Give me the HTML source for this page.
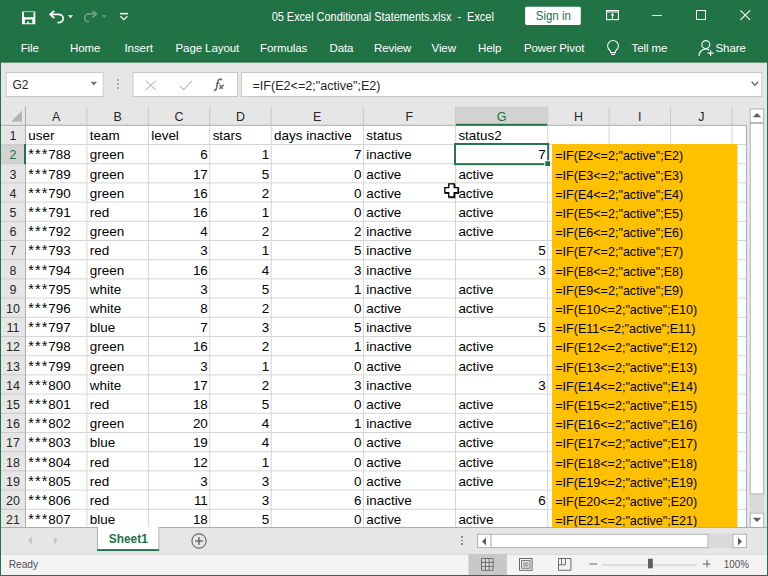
<!DOCTYPE html>
<html><head><meta charset="utf-8">
<style>
html,body{margin:0;padding:0;width:768px;height:576px;overflow:hidden;background:#217346;}
#w{position:absolute;left:0;top:0;width:800px;height:600px;transform:scale(0.96);transform-origin:0 0;background:#E6E6E6;overflow:hidden;font-family:"Liberation Sans",sans-serif;}
#o{position:absolute;left:0;top:0;width:768px;height:576px;overflow:hidden;}
.a{position:absolute;}
svg.a{overflow:visible;}
.t{position:absolute;white-space:nowrap;line-height:1;}
#top{position:absolute;left:0;top:0;width:800px;height:65px;background:#217346;}
.wt{color:#fff;font-size:12px;letter-spacing:-0.1px;}
.box{position:absolute;background:#fff;border:1px solid #C6C6C6;box-sizing:border-box;}
.ch{position:absolute;top:111px;height:19px;color:#262626;font-size:13px;text-align:center;line-height:21px;}
.ch.sel{background:#D2D2D2;color:#217346;}
.hsep{position:absolute;top:111px;width:1px;height:19px;background:#C9C9C9;}
.rh{position:absolute;left:1px;width:25px;height:19px;color:#262626;font-size:13px;text-align:center;line-height:22px;}
.rh.sel{background:#D2D2D2;color:#217346;}
.vl{position:absolute;top:131px;width:1px;height:418px;background:#D4D4D4;}
.hl{position:absolute;left:27px;height:1px;width:750px;background:#D4D4D4;}
.c{position:absolute;height:19px;font-size:14px;line-height:20px;color:#000;white-space:nowrap;padding-left:2.5px;padding-top:0px;box-sizing:border-box;}
.c.r{text-align:right;padding-left:0;padding-right:1.5px;}
.c.f{transform:scaleX(0.935);transform-origin:0 0;margin-top:0.6px;}
.ast{font-size:15px;letter-spacing:1.1px;}
.orange{position:absolute;background:#FFC000;}
</style></head><body>
<div id="w">
<div id="top"></div>
<div class="a" style="left:0;top:64px;width:800px;height:1px;background:#1E6B40;"></div>
<div class="t wt" style="left:283px;top:12.3px;font-size:12.5px;letter-spacing:0;transform:scaleX(0.91);transform-origin:0 0;">05 Excel Conditional Statements.xlsx &nbsp;- &nbsp;Excel</div>
<div class="a" style="left:547px;top:7px;width:58.2px;height:19px;background:#fff;border-radius:1.5px;"></div>
<div class="t" style="left:558px;top:10.2px;font-size:13px;color:#217346;transform:scaleX(0.925);transform-origin:0 0;">Sign in</div>
<!-- tabs -->
<div class="t wt" style="left:21.5px;top:43.6px;">File</div>
<div class="t wt" style="left:73px;top:43.6px;">Home</div>
<div class="t wt" style="left:129.7px;top:43.6px;">Insert</div>
<div class="t wt" style="left:182.8px;top:43.6px;">Page Layout</div>
<div class="t wt" style="left:270.8px;top:43.6px;">Formulas</div>
<div class="t wt" style="left:343.2px;top:43.6px;">Data</div>
<div class="t wt" style="left:389.6px;top:43.6px;">Review</div>
<div class="t wt" style="left:449.5px;top:43.6px;">View</div>
<div class="t wt" style="left:498px;top:43.6px;">Help</div>
<div class="t wt" style="left:545.8px;top:43.6px;">Power Pivot</div>
<div class="t wt" style="left:657.8px;top:43.6px;">Tell me</div>
<div class="t wt" style="left:745.3px;top:43.6px;">Share</div>

<!-- formula bar -->
<div class="box" style="left:6px;top:75px;width:102px;height:26px;"></div>
<div class="t" style="left:13px;top:83.3px;font-size:12.5px;color:#262626;">G2</div>
<div class="box" style="left:138px;top:75px;width:110px;height:26px;"></div>
<div class="box" style="left:251px;top:75px;width:543px;height:26px;"></div>
<div class="t" style="left:262.5px;top:81.8px;font-size:14px;color:#262626;transform:scaleX(0.935);transform-origin:0 0;">=IF(E2&lt;=2;"active";E2)</div>

<!-- grid -->
<div class="a" style="left:1px;top:111px;width:776px;height:19px;background:#E6E6E6;"></div>
<div class="a" style="left:27px;top:131px;width:750px;height:418px;background:#fff"></div>
<div class="ch" style="left:27px;width:63px">A</div>
<div class="ch" style="left:91px;width:63px">B</div>
<div class="ch" style="left:155px;width:63px">C</div>
<div class="ch" style="left:219px;width:63px">D</div>
<div class="ch" style="left:283px;width:95px">E</div>
<div class="ch" style="left:379px;width:95px">F</div>
<div class="ch sel" style="left:475px;width:95px">G</div>
<div class="ch" style="left:571px;width:63px">H</div>
<div class="ch" style="left:635px;width:63px">I</div>
<div class="ch" style="left:699px;width:63px">J</div>
<div class="hsep" style="left:26px"></div>
<div class="hsep" style="left:90px"></div>
<div class="hsep" style="left:154px"></div>
<div class="hsep" style="left:218px"></div>
<div class="hsep" style="left:282px"></div>
<div class="hsep" style="left:378px"></div>
<div class="hsep" style="left:474px"></div>
<div class="hsep" style="left:570px"></div>
<div class="hsep" style="left:634px"></div>
<div class="hsep" style="left:698px"></div>
<div class="hsep" style="left:762px"></div>
<div class="a" style="left:1px;top:130px;width:776px;height:1px;background:#ABABAB"></div>
<div class="rh" style="top:131px">1</div>
<div class="a" style="left:1px;top:150px;width:25px;height:1px;background:#C9C9C9"></div>
<div class="rh sel" style="top:151px">2</div>
<div class="a" style="left:1px;top:170px;width:25px;height:1px;background:#C9C9C9"></div>
<div class="rh" style="top:171px">3</div>
<div class="a" style="left:1px;top:190px;width:25px;height:1px;background:#C9C9C9"></div>
<div class="rh" style="top:191px">4</div>
<div class="a" style="left:1px;top:210px;width:25px;height:1px;background:#C9C9C9"></div>
<div class="rh" style="top:211px">5</div>
<div class="a" style="left:1px;top:230px;width:25px;height:1px;background:#C9C9C9"></div>
<div class="rh" style="top:231px">6</div>
<div class="a" style="left:1px;top:250px;width:25px;height:1px;background:#C9C9C9"></div>
<div class="rh" style="top:251px">7</div>
<div class="a" style="left:1px;top:270px;width:25px;height:1px;background:#C9C9C9"></div>
<div class="rh" style="top:271px">8</div>
<div class="a" style="left:1px;top:290px;width:25px;height:1px;background:#C9C9C9"></div>
<div class="rh" style="top:291px">9</div>
<div class="a" style="left:1px;top:310px;width:25px;height:1px;background:#C9C9C9"></div>
<div class="rh" style="top:311px">10</div>
<div class="a" style="left:1px;top:330px;width:25px;height:1px;background:#C9C9C9"></div>
<div class="rh" style="top:331px">11</div>
<div class="a" style="left:1px;top:350px;width:25px;height:1px;background:#C9C9C9"></div>
<div class="rh" style="top:351px">12</div>
<div class="a" style="left:1px;top:370px;width:25px;height:1px;background:#C9C9C9"></div>
<div class="rh" style="top:371px">13</div>
<div class="a" style="left:1px;top:390px;width:25px;height:1px;background:#C9C9C9"></div>
<div class="rh" style="top:391px">14</div>
<div class="a" style="left:1px;top:410px;width:25px;height:1px;background:#C9C9C9"></div>
<div class="rh" style="top:411px">15</div>
<div class="a" style="left:1px;top:430px;width:25px;height:1px;background:#C9C9C9"></div>
<div class="rh" style="top:431px">16</div>
<div class="a" style="left:1px;top:450px;width:25px;height:1px;background:#C9C9C9"></div>
<div class="rh" style="top:451px">17</div>
<div class="a" style="left:1px;top:470px;width:25px;height:1px;background:#C9C9C9"></div>
<div class="rh" style="top:471px">18</div>
<div class="a" style="left:1px;top:490px;width:25px;height:1px;background:#C9C9C9"></div>
<div class="rh" style="top:491px">19</div>
<div class="a" style="left:1px;top:510px;width:25px;height:1px;background:#C9C9C9"></div>
<div class="rh" style="top:511px">20</div>
<div class="a" style="left:1px;top:530px;width:25px;height:1px;background:#C9C9C9"></div>
<div class="rh" style="top:531px">21</div>
<div class="a" style="left:26px;top:111px;width:1px;height:438px;background:#ABABAB"></div>
<div class="a" style="left:25px;top:150px;width:2px;height:21px;background:#217346"></div>
<div class="vl" style="left:90px"></div>
<div class="vl" style="left:154px"></div>
<div class="vl" style="left:218px"></div>
<div class="vl" style="left:282px"></div>
<div class="vl" style="left:378px"></div>
<div class="vl" style="left:474px"></div>
<div class="vl" style="left:570px"></div>
<div class="vl" style="left:634px"></div>
<div class="vl" style="left:698px"></div>
<div class="vl" style="left:762px"></div>
<div class="hl" style="top:150px"></div>
<div class="hl" style="top:170px"></div>
<div class="hl" style="top:190px"></div>
<div class="hl" style="top:210px"></div>
<div class="hl" style="top:230px"></div>
<div class="hl" style="top:250px"></div>
<div class="hl" style="top:270px"></div>
<div class="hl" style="top:290px"></div>
<div class="hl" style="top:310px"></div>
<div class="hl" style="top:330px"></div>
<div class="hl" style="top:350px"></div>
<div class="hl" style="top:370px"></div>
<div class="hl" style="top:390px"></div>
<div class="hl" style="top:410px"></div>
<div class="hl" style="top:430px"></div>
<div class="hl" style="top:450px"></div>
<div class="hl" style="top:470px"></div>
<div class="hl" style="top:490px"></div>
<div class="hl" style="top:510px"></div>
<div class="hl" style="top:530px"></div>
<div class="orange" style="left:575px;top:150px;width:193px;height:399px"></div>
<div class="c" style="top:131px;left:27px">user</div>
<div class="c" style="top:131px;left:91px">team</div>
<div class="c" style="top:131px;left:155px">level</div>
<div class="c" style="top:131px;left:219px">stars</div>
<div class="c" style="top:131px;left:283px">days inactive</div>
<div class="c" style="top:131px;left:379px">status</div>
<div class="c" style="top:131px;left:475px">status2</div>
<div class="c" style="top:151px;left:27px"><span class="ast">***</span>788</div>
<div class="c" style="top:151px;left:91px">green</div>
<div class="c r" style="top:151px;left:155px;width:63px">6</div>
<div class="c r" style="top:151px;left:219px;width:63px">1</div>
<div class="c r" style="top:151px;left:283px;width:95px">7</div>
<div class="c" style="top:151px;left:379px">inactive</div>
<div class="c r" style="top:151px;left:475px;width:95px">7</div>
<div class="c f" style="top:151px;left:575.8px">=IF(E2&lt;=2;"active";E2)</div>
<div class="c" style="top:171px;left:27px"><span class="ast">***</span>789</div>
<div class="c" style="top:171px;left:91px">green</div>
<div class="c r" style="top:171px;left:155px;width:63px">17</div>
<div class="c r" style="top:171px;left:219px;width:63px">5</div>
<div class="c r" style="top:171px;left:283px;width:95px">0</div>
<div class="c" style="top:171px;left:379px">active</div>
<div class="c" style="top:171px;left:475px">active</div>
<div class="c f" style="top:171px;left:575.8px">=IF(E3&lt;=2;"active";E3)</div>
<div class="c" style="top:191px;left:27px"><span class="ast">***</span>790</div>
<div class="c" style="top:191px;left:91px">green</div>
<div class="c r" style="top:191px;left:155px;width:63px">16</div>
<div class="c r" style="top:191px;left:219px;width:63px">2</div>
<div class="c r" style="top:191px;left:283px;width:95px">0</div>
<div class="c" style="top:191px;left:379px">active</div>
<div class="c" style="top:191px;left:475px">active</div>
<div class="c f" style="top:191px;left:575.8px">=IF(E4&lt;=2;"active";E4)</div>
<div class="c" style="top:211px;left:27px"><span class="ast">***</span>791</div>
<div class="c" style="top:211px;left:91px">red</div>
<div class="c r" style="top:211px;left:155px;width:63px">16</div>
<div class="c r" style="top:211px;left:219px;width:63px">1</div>
<div class="c r" style="top:211px;left:283px;width:95px">0</div>
<div class="c" style="top:211px;left:379px">active</div>
<div class="c" style="top:211px;left:475px">active</div>
<div class="c f" style="top:211px;left:575.8px">=IF(E5&lt;=2;"active";E5)</div>
<div class="c" style="top:231px;left:27px"><span class="ast">***</span>792</div>
<div class="c" style="top:231px;left:91px">green</div>
<div class="c r" style="top:231px;left:155px;width:63px">4</div>
<div class="c r" style="top:231px;left:219px;width:63px">2</div>
<div class="c r" style="top:231px;left:283px;width:95px">2</div>
<div class="c" style="top:231px;left:379px">inactive</div>
<div class="c" style="top:231px;left:475px">active</div>
<div class="c f" style="top:231px;left:575.8px">=IF(E6&lt;=2;"active";E6)</div>
<div class="c" style="top:251px;left:27px"><span class="ast">***</span>793</div>
<div class="c" style="top:251px;left:91px">red</div>
<div class="c r" style="top:251px;left:155px;width:63px">3</div>
<div class="c r" style="top:251px;left:219px;width:63px">1</div>
<div class="c r" style="top:251px;left:283px;width:95px">5</div>
<div class="c" style="top:251px;left:379px">inactive</div>
<div class="c r" style="top:251px;left:475px;width:95px">5</div>
<div class="c f" style="top:251px;left:575.8px">=IF(E7&lt;=2;"active";E7)</div>
<div class="c" style="top:271px;left:27px"><span class="ast">***</span>794</div>
<div class="c" style="top:271px;left:91px">green</div>
<div class="c r" style="top:271px;left:155px;width:63px">16</div>
<div class="c r" style="top:271px;left:219px;width:63px">4</div>
<div class="c r" style="top:271px;left:283px;width:95px">3</div>
<div class="c" style="top:271px;left:379px">inactive</div>
<div class="c r" style="top:271px;left:475px;width:95px">3</div>
<div class="c f" style="top:271px;left:575.8px">=IF(E8&lt;=2;"active";E8)</div>
<div class="c" style="top:291px;left:27px"><span class="ast">***</span>795</div>
<div class="c" style="top:291px;left:91px">white</div>
<div class="c r" style="top:291px;left:155px;width:63px">3</div>
<div class="c r" style="top:291px;left:219px;width:63px">5</div>
<div class="c r" style="top:291px;left:283px;width:95px">1</div>
<div class="c" style="top:291px;left:379px">inactive</div>
<div class="c" style="top:291px;left:475px">active</div>
<div class="c f" style="top:291px;left:575.8px">=IF(E9&lt;=2;"active";E9)</div>
<div class="c" style="top:311px;left:27px"><span class="ast">***</span>796</div>
<div class="c" style="top:311px;left:91px">white</div>
<div class="c r" style="top:311px;left:155px;width:63px">8</div>
<div class="c r" style="top:311px;left:219px;width:63px">2</div>
<div class="c r" style="top:311px;left:283px;width:95px">0</div>
<div class="c" style="top:311px;left:379px">active</div>
<div class="c" style="top:311px;left:475px">active</div>
<div class="c f" style="top:311px;left:575.8px">=IF(E10&lt;=2;"active";E10)</div>
<div class="c" style="top:331px;left:27px"><span class="ast">***</span>797</div>
<div class="c" style="top:331px;left:91px">blue</div>
<div class="c r" style="top:331px;left:155px;width:63px">7</div>
<div class="c r" style="top:331px;left:219px;width:63px">3</div>
<div class="c r" style="top:331px;left:283px;width:95px">5</div>
<div class="c" style="top:331px;left:379px">inactive</div>
<div class="c r" style="top:331px;left:475px;width:95px">5</div>
<div class="c f" style="top:331px;left:575.8px">=IF(E11&lt;=2;"active";E11)</div>
<div class="c" style="top:351px;left:27px"><span class="ast">***</span>798</div>
<div class="c" style="top:351px;left:91px">green</div>
<div class="c r" style="top:351px;left:155px;width:63px">16</div>
<div class="c r" style="top:351px;left:219px;width:63px">2</div>
<div class="c r" style="top:351px;left:283px;width:95px">1</div>
<div class="c" style="top:351px;left:379px">inactive</div>
<div class="c" style="top:351px;left:475px">active</div>
<div class="c f" style="top:351px;left:575.8px">=IF(E12&lt;=2;"active";E12)</div>
<div class="c" style="top:371px;left:27px"><span class="ast">***</span>799</div>
<div class="c" style="top:371px;left:91px">green</div>
<div class="c r" style="top:371px;left:155px;width:63px">3</div>
<div class="c r" style="top:371px;left:219px;width:63px">1</div>
<div class="c r" style="top:371px;left:283px;width:95px">0</div>
<div class="c" style="top:371px;left:379px">active</div>
<div class="c" style="top:371px;left:475px">active</div>
<div class="c f" style="top:371px;left:575.8px">=IF(E13&lt;=2;"active";E13)</div>
<div class="c" style="top:391px;left:27px"><span class="ast">***</span>800</div>
<div class="c" style="top:391px;left:91px">white</div>
<div class="c r" style="top:391px;left:155px;width:63px">17</div>
<div class="c r" style="top:391px;left:219px;width:63px">2</div>
<div class="c r" style="top:391px;left:283px;width:95px">3</div>
<div class="c" style="top:391px;left:379px">inactive</div>
<div class="c r" style="top:391px;left:475px;width:95px">3</div>
<div class="c f" style="top:391px;left:575.8px">=IF(E14&lt;=2;"active";E14)</div>
<div class="c" style="top:411px;left:27px"><span class="ast">***</span>801</div>
<div class="c" style="top:411px;left:91px">red</div>
<div class="c r" style="top:411px;left:155px;width:63px">18</div>
<div class="c r" style="top:411px;left:219px;width:63px">5</div>
<div class="c r" style="top:411px;left:283px;width:95px">0</div>
<div class="c" style="top:411px;left:379px">active</div>
<div class="c" style="top:411px;left:475px">active</div>
<div class="c f" style="top:411px;left:575.8px">=IF(E15&lt;=2;"active";E15)</div>
<div class="c" style="top:431px;left:27px"><span class="ast">***</span>802</div>
<div class="c" style="top:431px;left:91px">green</div>
<div class="c r" style="top:431px;left:155px;width:63px">20</div>
<div class="c r" style="top:431px;left:219px;width:63px">4</div>
<div class="c r" style="top:431px;left:283px;width:95px">1</div>
<div class="c" style="top:431px;left:379px">inactive</div>
<div class="c" style="top:431px;left:475px">active</div>
<div class="c f" style="top:431px;left:575.8px">=IF(E16&lt;=2;"active";E16)</div>
<div class="c" style="top:451px;left:27px"><span class="ast">***</span>803</div>
<div class="c" style="top:451px;left:91px">blue</div>
<div class="c r" style="top:451px;left:155px;width:63px">19</div>
<div class="c r" style="top:451px;left:219px;width:63px">4</div>
<div class="c r" style="top:451px;left:283px;width:95px">0</div>
<div class="c" style="top:451px;left:379px">active</div>
<div class="c" style="top:451px;left:475px">active</div>
<div class="c f" style="top:451px;left:575.8px">=IF(E17&lt;=2;"active";E17)</div>
<div class="c" style="top:471px;left:27px"><span class="ast">***</span>804</div>
<div class="c" style="top:471px;left:91px">red</div>
<div class="c r" style="top:471px;left:155px;width:63px">12</div>
<div class="c r" style="top:471px;left:219px;width:63px">1</div>
<div class="c r" style="top:471px;left:283px;width:95px">0</div>
<div class="c" style="top:471px;left:379px">active</div>
<div class="c" style="top:471px;left:475px">active</div>
<div class="c f" style="top:471px;left:575.8px">=IF(E18&lt;=2;"active";E18)</div>
<div class="c" style="top:491px;left:27px"><span class="ast">***</span>805</div>
<div class="c" style="top:491px;left:91px">red</div>
<div class="c r" style="top:491px;left:155px;width:63px">3</div>
<div class="c r" style="top:491px;left:219px;width:63px">3</div>
<div class="c r" style="top:491px;left:283px;width:95px">0</div>
<div class="c" style="top:491px;left:379px">active</div>
<div class="c" style="top:491px;left:475px">active</div>
<div class="c f" style="top:491px;left:575.8px">=IF(E19&lt;=2;"active";E19)</div>
<div class="c" style="top:511px;left:27px"><span class="ast">***</span>806</div>
<div class="c" style="top:511px;left:91px">red</div>
<div class="c r" style="top:511px;left:155px;width:63px">11</div>
<div class="c r" style="top:511px;left:219px;width:63px">3</div>
<div class="c r" style="top:511px;left:283px;width:95px">6</div>
<div class="c" style="top:511px;left:379px">inactive</div>
<div class="c r" style="top:511px;left:475px;width:95px">6</div>
<div class="c f" style="top:511px;left:575.8px">=IF(E20&lt;=2;"active";E20)</div>
<div class="c" style="top:531px;left:27px"><span class="ast">***</span>807</div>
<div class="c" style="top:531px;left:91px">blue</div>
<div class="c r" style="top:531px;left:155px;width:63px">18</div>
<div class="c r" style="top:531px;left:219px;width:63px">5</div>
<div class="c r" style="top:531px;left:283px;width:95px">0</div>
<div class="c" style="top:531px;left:379px">active</div>
<div class="c" style="top:531px;left:475px">active</div>
<div class="c f" style="top:531px;left:575.8px">=IF(E21&lt;=2;"active";E21)</div>
<!-- selection G2 -->
<div class="a" style="left:473px;top:149px;width:99px;height:23px;border:2px solid #217346;box-sizing:border-box;"></div>
<div class="a" style="left:475px;top:129px;width:95px;height:2px;background:#217346;"></div>
<div class="a" style="left:567px;top:167px;width:7px;height:7px;background:#fff;"></div>
<div class="a" style="left:568px;top:168px;width:5px;height:5px;background:#217346;"></div>
<!-- grid right border -->
<div class="a" style="left:777px;top:130px;width:1px;height:419px;background:#ABABAB;"></div>
<!-- v scrollbar -->
<div class="a" style="left:781px;top:113px;width:15px;height:437px;background:#DADADA;"></div>
<div class="box" style="left:781px;top:113px;width:15px;height:15px;border-color:#ABABAB"></div>
<div class="box" style="left:781px;top:128px;width:15px;height:387px;border-color:#ABABAB"></div>
<div class="box" style="left:781px;top:534px;width:15px;height:16px;border-color:#ABABAB"></div>

<!-- tab bar -->
<div class="a" style="left:1px;top:549px;width:798px;height:1px;background:#ABABAB;"></div>
<div class="a" style="left:101px;top:549px;width:65px;height:25px;background:#fff;border-left:1px solid #ABABAB;border-right:1px solid #ABABAB;border-bottom:2px solid #217346;box-sizing:border-box;"></div>
<div class="t" style="left:113.3px;top:556.4px;font-size:12.4px;font-weight:bold;color:#217346;">Sheet1</div>
<div class="a" style="left:497px;top:556px;width:281px;height:15px;background:#DADADA;"></div>
<div class="box" style="left:497px;top:556px;width:15px;height:15px;border-color:#ABABAB"></div>
<div class="box" style="left:511px;top:556px;width:227px;height:15px;border-color:#ABABAB"></div>
<div class="box" style="left:763px;top:556px;width:15px;height:15px;border-color:#ABABAB"></div>
<div class="a" style="left:1px;top:577px;width:798px;height:1px;background:#D4D4D4;"></div>

<!-- status bar -->
<div class="a" style="left:1px;top:578px;width:798px;height:22px;background:#F3F3F3;"></div>
<div class="t" style="left:9.4px;top:582.6px;font-size:11.2px;color:#505050;transform:scaleX(0.95);transform-origin:0 0;">Ready</div>
<div class="a" style="left:488px;top:577px;width:40px;height:22px;background:#C8C8C8;"></div>
<div class="a" style="left:613.5px;top:586.7px;width:8.4px;height:1px;background:#5F5F5F;"></div>
<div class="a" style="left:627px;top:587.5px;width:99px;height:1px;background:#C6C6C6;"></div>
<div class="a" style="left:675px;top:582.3px;width:5.2px;height:10.2px;background:#5F5F5F;"></div>
<div class="a" style="left:732px;top:586.7px;width:8px;height:1px;background:#5F5F5F;"></div>
<div class="a" style="left:735.5px;top:583.2px;width:1px;height:8px;background:#5F5F5F;"></div>
<div class="t" style="left:753.75px;top:582.6px;font-size:11.2px;color:#505050;transform:scaleX(0.91);transform-origin:0 0;">100%</div>
</div>

<!-- overlay in target coordinates -->
<div id="o">
<div class="a" style="left:0;top:0;width:1px;height:576px;background:#217346;"></div>
<div class="a" style="left:767px;top:0;width:1px;height:576px;background:#217346;"></div>
<div class="a" style="left:0;top:575px;width:768px;height:1px;background:#217346;"></div>
<!-- save -->
<svg class="a" style="left:22px;top:10.6px" width="13.3" height="13.2" viewBox="0 0 13.3 13.2">
 <path fill-rule="evenodd" fill="#fff" d="M0 1.2H13.3V13.2H0Z M2.04 1.2H11.5V5.4Q11.5 6.2 10.7 6.2H2.84Q2.04 6.2 2.04 5.4Z M2.94 8.4H10.34V12.3H6.79V10.5H5.04V12.3H2.94Z"/>
 <rect x="0" y="0" width="13.3" height="1.2" fill="#fff" opacity="0.55"/>
</svg>
<!-- undo -->
<svg class="a" style="left:48px;top:9px" width="28" height="16" viewBox="0 0 28 16">
 <path d="M2.4 5.3H10.1A5.1 4.2 0 0 1 10.1 13.7H9.5" fill="none" stroke="#fff" stroke-width="1.8"/>
 <path d="M6.2 1.8L2.3 5.3L6.2 9" fill="none" stroke="#fff" stroke-width="1.8"/>
 <path d="M20 6.2H25L22.5 9.3Z" fill="#fff"/>
</svg>
<!-- redo -->
<svg class="a" style="left:82px;top:9px" width="28" height="16" viewBox="0 0 28 16" opacity="0.35">
 <path d="M14.4 5H6.6A3.9 3.9 0 0 0 6.6 12.8H7" fill="none" stroke="#fff" stroke-width="1.6"/>
 <path d="M10.4 2L14.4 5L10.4 8.5" fill="none" stroke="#fff" stroke-width="1.6"/>
 <path d="M20 6.2H24.4L22.2 8.7Z" fill="#fff"/>
</svg>
<!-- customize -->
<svg class="a" style="left:119px;top:11px" width="10" height="10" viewBox="0 0 10 10">
 <rect x="1" y="1.9" width="8" height="1.5" fill="#fff"/>
 <path d="M1.4 5.2L4.9 8.6L8.4 5.2" fill="none" stroke="#fff" stroke-width="1.2"/>
</svg>
<!-- ribbon display options -->
<svg class="a" style="left:605.5px;top:10px" width="13" height="10.2" viewBox="0 0 13 10.2">
 <rect x="0.55" y="0.55" width="11.9" height="9.1" fill="none" stroke="#fff" stroke-width="1.1"/>
 <rect x="0.55" y="0.55" width="11.9" height="2.4" fill="#fff" opacity="0.5"/>
 <path d="M6.5 2.9L4.5 5.6H8.5Z" fill="#fff"/>
 <path d="M6.5 5.3V9.6" stroke="#fff" stroke-width="1.1"/>
</svg>
<div class="a" style="left:652px;top:15.2px;width:10px;height:1.1px;background:#fff;opacity:0.85"></div>
<div class="a" style="left:696px;top:10.3px;width:9.8px;height:9.8px;border:1.1px solid #fff;box-sizing:border-box;"></div>
<svg class="a" style="left:739.6px;top:10.1px" width="10.5" height="10.2" viewBox="0 0 10.5 10.2">
 <path d="M0.4 0.4L10.1 9.8M10.1 0.4L0.4 9.8" stroke="#fff" stroke-width="1.1"/>
</svg>
<!-- tell me bulb -->
<svg class="a" style="left:607px;top:39.5px" width="12" height="16" viewBox="0 0 12 16">
 <path d="M3.6 11.2C2.2 9.9 0.6 8.5 0.6 5.9A5.4 5.4 0 0 1 11.4 5.9C11.4 8.5 9.8 9.9 8.4 11.2V12.6H3.6Z" fill="none" stroke="#fff" stroke-width="1.05"/>
 <path d="M4.2 14.4H7.8" stroke="#fff" stroke-width="1.05"/>
</svg>
<!-- share -->
<svg class="a" style="left:697.5px;top:39px" width="16" height="18" viewBox="0 0 16 18">
 <circle cx="7.8" cy="5.6" r="4" fill="none" stroke="#fff" stroke-width="1.1"/>
 <path d="M1 17C1 13 4 10 7.8 10C9.2 10 10.3 10.4 11.2 11" fill="none" stroke="#fff" stroke-width="1.1"/>
 <path d="M12.6 11.2V17M9.7 14.1H15.5" stroke="#fff" stroke-width="1.1"/>
</svg>
<!-- name box arrow -->
<svg class="a" style="left:90px;top:81px" width="8" height="5" viewBox="0 0 8 5"><path d="M0.5 0.8H7.1L3.8 4.4Z" fill="#7A7A7A"/></svg>
<div class="a" style="left:117.1px;top:79.2px;width:2px;height:2px;border-radius:1px;background:#999;"></div>
<div class="a" style="left:117.1px;top:82.9px;width:2px;height:2px;border-radius:1px;background:#999;"></div>
<div class="a" style="left:117.1px;top:87.1px;width:2px;height:2px;border-radius:1px;background:#999;"></div>
<svg class="a" style="left:145px;top:79.5px" width="12" height="11" viewBox="0 0 12 11"><path d="M0.7 0.6L10.9 10.2M10.9 0.6L0.7 10.2" stroke="#BDBDBD" stroke-width="1.1"/></svg>
<svg class="a" style="left:179px;top:79.5px" width="14" height="11" viewBox="0 0 14 11"><path d="M0.8 5.8L4.6 9.6L12.8 0.8" fill="none" stroke="#BDBDBD" stroke-width="1.2"/></svg>
<svg class="a" style="left:213.2px;top:78.3px" width="12" height="14" viewBox="0 0 12 14">
 <path d="M7.4 1.4C6 1 5.2 2 4.9 3.5L3.5 10.1C3.2 11.7 2.5 12.5 0.9 12.3" fill="none" stroke="#6A6A6A" stroke-width="1.6"/>
 <path d="M7 1.2C7.9 1.2 8.4 1.6 8.6 2.3" fill="none" stroke="#6A6A6A" stroke-width="1.8"/>
 <path d="M2.8 5.4H6.6" stroke="#6A6A6A" stroke-width="1.1"/>
 <path d="M6.6 6.9L9.7 10.9M10.7 6.7L6.2 10.9" stroke="#6A6A6A" stroke-width="1.5"/>
</svg>
<svg class="a" style="left:750.5px;top:81px" width="8" height="6" viewBox="0 0 8 6"><path d="M0.7 0.7L3.9 4.2L7.1 0.7" fill="none" stroke="#6A6A6A" stroke-width="1.4"/></svg>
<!-- select all triangle -->
<svg class="a" style="left:10px;top:110px" width="13" height="13" viewBox="0 0 13 13"><path d="M12 0.6V11.8H0.8Z" fill="#B4B4B4"/></svg>
<!-- scroll arrows -->
<svg class="a" style="left:752px;top:112px" width="10" height="6" viewBox="0 0 10 6"><path d="M0.8 5.2H9.2L5 1Z" fill="#606060"/></svg>
<svg class="a" style="left:752px;top:517px" width="10" height="6" viewBox="0 0 10 6"><path d="M0.8 0.8H9.2L5 5Z" fill="#606060"/></svg>
<svg class="a" style="left:481px;top:537px" width="6" height="9" viewBox="0 0 6 9"><path d="M5 0.5V8.5L1 4.5Z" fill="#606060"/></svg>
<svg class="a" style="left:737px;top:537px" width="6" height="9" viewBox="0 0 6 9"><path d="M1 0.5V8.5L5 4.5Z" fill="#606060"/></svg>
<svg class="a" style="left:27px;top:536px" width="6" height="9" viewBox="0 0 6 9"><path d="M5 0.5V8.5L1 4.5Z" fill="#C6C6C6"/></svg>
<svg class="a" style="left:53px;top:536px" width="6" height="9" viewBox="0 0 6 9"><path d="M1 0.5V8.5L5 4.5Z" fill="#C6C6C6"/></svg>
<!-- plus circle -->
<svg class="a" style="left:190.5px;top:532.5px" width="16" height="16" viewBox="0 0 16 16"><circle cx="8" cy="8" r="7.1" fill="none" stroke="#6A6A6A" stroke-width="1.1"/><path d="M8 4.2V11.8M4.2 8H11.8" stroke="#6A6A6A" stroke-width="1.5"/></svg>
<div class="a" style="left:461.3px;top:536px;width:1.6px;height:1.6px;background:#8C8C8C;"></div>
<div class="a" style="left:461.3px;top:539.7px;width:1.6px;height:1.6px;background:#8C8C8C;"></div>
<div class="a" style="left:461.3px;top:543.4px;width:1.6px;height:1.6px;background:#8C8C8C;"></div>
<!-- view icons -->
<svg class="a" style="left:481px;top:557.7px" width="12.6" height="12.8" viewBox="0 0 12.6 12.8"><rect x="0.5" y="0.5" width="11.6" height="11.8" fill="#D9D9D9"/><path d="M0.5 0.5H12.1V12.3H0.5ZM0.5 4.4H12.1M0.5 8.4H12.1M4.4 0.5V12.3M8.2 0.5V12.3" fill="none" stroke="#6A6A6A" stroke-width="1"/></svg>
<svg class="a" style="left:519.2px;top:557.7px" width="13.6" height="12.8" viewBox="0 0 13.6 12.8"><rect x="0.5" y="0.5" width="12.6" height="11.8" fill="none" stroke="#6A6A6A"/><rect x="2.6" y="2.6" width="8.4" height="7.6" fill="none" stroke="#6A6A6A" stroke-width="0.9"/><rect x="4" y="4" width="5.6" height="4.8" fill="#B0B0B0"/></svg>
<svg class="a" style="left:557.8px;top:557.7px" width="13.4" height="12.8" viewBox="0 0 13.4 12.8"><path d="M0.5 0.5H12.9V12.3H0.5ZM0.5 6.8H7.4V0.5M3.5 0.5V6.8" fill="none" stroke="#6A6A6A"/></svg>
<!-- cursor -->
<svg class="a" style="left:444px;top:183px" width="16" height="16" viewBox="0 0 16 16">
 <path d="M4.1 0.2H10.8V4H14.75V10.4H10.8V14.6H4.1V10.4H0.2V4H4.1Z" fill="#000"/>
 <path d="M4.7 0.8H11.4V4.6H15.2V11H11.4V15.2H4.7V11H0.8V4.6H4.7Z" fill="#000" opacity="0.8"/>
 <path d="M5.4 1.5H9.5V5.3H13.4V9.1H9.5V13.3H5.4V9.1H1.5V5.3H5.4Z" fill="#fff"/>
</svg>
</div>
</body></html>
